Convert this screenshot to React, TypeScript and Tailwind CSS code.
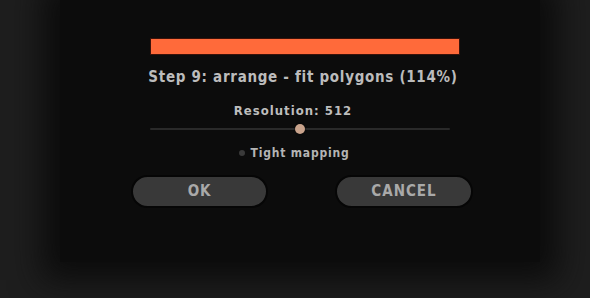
import React from 'react';

const App: React.FC = () => {
  const progress = 114;
  const resolution = 0.5;

  return (
    <div className="w-[590px] h-[298px] bg-[#1e1e1e] overflow-hidden font-['DejaVu_Sans_Condensed','DejaVu_Sans',sans-serif]">
      <div className="ml-[60px] w-[480px] h-[262px] bg-[#0c0c0c] shadow-[0_0_30px_18px_#0c0c0c] flex flex-col items-center pt-[38px]">
        {/* progress */}
        <div className="w-[300px] h-[17px] bg-[#1a0a06] relative">
          <div className="absolute left-0 top-0 h-[17px] bg-[#ff6a3a] border border-[#3a120a]" style={{ width: `${(progress / 100) * 272}px` }} />
        </div>
        <div className="mt-[12px] text-[15px] font-bold text-[#bcbcbc] tracking-[0.7px] leading-[20px] ml-[6px]">
          Step 9: arrange - fit polygons ({progress}%)
        </div>

        {/* resolution slider */}
        <div className="mt-[16px] text-[13px] font-bold text-[#bdbdbd] tracking-[1px] leading-[16px] -ml-[14px]">Resolution: 512</div>
        <div className="mt-[4px] w-[300px] h-[12px] relative flex items-center">
          <div className="w-full h-[2px] bg-[#2a2a2a] rounded-full" />
          <div className="absolute top-[1px] w-[10px] h-[10px] rounded-full bg-[#c9a38c] shadow-[0_0_2px_#000]" style={{ left: `${resolution * 300 - 5}px` }} />
        </div>

        {/* tight mapping */}
        <div className="mt-[11px] flex items-center gap-[6px] -ml-[12px]">
          <div className="w-[6px] h-[6px] rounded-full bg-[#3a3a3a]" />
          <span className="text-[12px] font-bold text-[#b4b4b4] tracking-[0.8px] leading-[14px]">Tight mapping</span>
        </div>

        {/* buttons */}
        <div className="mt-[15px] flex gap-[67px] ml-[4px]">
          <button className="w-[137px] h-[33px] rounded-full bg-[#393939] border-2 border-[#060606] text-[15px] font-bold text-[#a9a9a9] tracking-[0.8px]">OK</button>
          <button className="w-[138px] h-[33px] rounded-full bg-[#393939] border-2 border-[#060606] text-[15px] font-bold text-[#a9a9a9] tracking-[1px]">CANCEL</button>
        </div>
      </div>
    </div>
  );
};

export default App;
